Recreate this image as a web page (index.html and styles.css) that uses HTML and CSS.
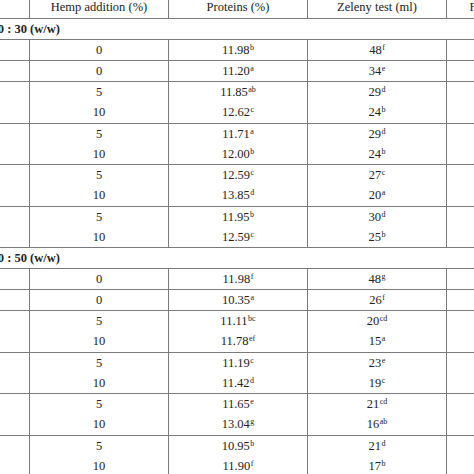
FILE: index.html
```html
<!DOCTYPE html>
<html>
<head>
<meta charset="utf-8">
<link rel="stylesheet" href="styles.css">
</head>
<body>
<div class="viewport">
<table class="tbl">
<colgroup><col class="c"><col class="c"><col class="c"><col class="c"><col class="c"></colgroup>
<thead>
<tr class="head"><th></th><th>Hemp addition (%)</th><th>Proteins (%)</th><th>Zeleny test (ml)</th><th>Falling number (s)</th></tr>
</thead>
<tbody>
<tr class="sec"><td colspan="5"><span class="sec-t">70 : 30 (w/w)</span></td></tr>
<tr class="one"><td></td><td>0</td><td>11.98<sup>b</sup></td><td>48<sup>f</sup></td><td></td></tr>
<tr class="one"><td></td><td>0</td><td>11.20<sup>a</sup></td><td>34<sup>e</sup></td><td></td></tr>
<tr class="two"><td></td><td><div>5</div><div>10</div></td><td><div>11.85<sup>ab</sup></div><div>12.62<sup>c</sup></div></td><td><div>29<sup>d</sup></div><div>24<sup>b</sup></div></td><td></td></tr>
<tr class="two"><td></td><td><div>5</div><div>10</div></td><td><div>11.71<sup>a</sup></div><div>12.00<sup>b</sup></div></td><td><div>29<sup>d</sup></div><div>24<sup>b</sup></div></td><td></td></tr>
<tr class="two"><td></td><td><div>5</div><div>10</div></td><td><div>12.59<sup>c</sup></div><div>13.85<sup>d</sup></div></td><td><div>27<sup>c</sup></div><div>20<sup>a</sup></div></td><td></td></tr>
<tr class="two"><td></td><td><div>5</div><div>10</div></td><td><div>11.95<sup>b</sup></div><div>12.59<sup>c</sup></div></td><td><div>30<sup>d</sup></div><div>25<sup>b</sup></div></td><td></td></tr>
<tr class="sec"><td colspan="5"><span class="sec-t">50 : 50 (w/w)</span></td></tr>
<tr class="one"><td></td><td>0</td><td>11.98<sup>f</sup></td><td>48<sup>g</sup></td><td></td></tr>
<tr class="one"><td></td><td>0</td><td>10.35<sup>a</sup></td><td>26<sup>f</sup></td><td></td></tr>
<tr class="two"><td></td><td><div>5</div><div>10</div></td><td><div>11.11<sup>bc</sup></div><div>11.78<sup>ef</sup></div></td><td><div>20<sup>cd</sup></div><div>15<sup>a</sup></div></td><td></td></tr>
<tr class="two"><td></td><td><div>5</div><div>10</div></td><td><div>11.19<sup>c</sup></div><div>11.42<sup>d</sup></div></td><td><div>23<sup>e</sup></div><div>19<sup>c</sup></div></td><td></td></tr>
<tr class="two"><td></td><td><div>5</div><div>10</div></td><td><div>11.65<sup>e</sup></div><div>13.04<sup>g</sup></div></td><td><div>21<sup>cd</sup></div><div>16<sup>ab</sup></div></td><td></td></tr>
<tr class="two"><td></td><td><div>5</div><div>10</div></td><td><div>10.95<sup>b</sup></div><div>11.90<sup>f</sup></div></td><td><div>21<sup>d</sup></div><div>17<sup>b</sup></div></td><td></td></tr>
</tbody>
</table>
</div>
</body>
</html>
```

FILE: styles.css
```css
html, body {
  margin: 0;
  padding: 0;
  background: #fff;
}
.viewport {
  width: 474px;
  height: 474px;
  overflow: hidden;
}
.tbl {
  border-collapse: collapse;
  table-layout: fixed;
  width: 695px;
  margin-left: -110px;
  margin-top: -5px;
  font-family: "Liberation Serif", "Times New Roman", serif;
  font-size: 12.5px;
  color: #222;
}
.tbl .c {
  width: 139px;
}
.tbl th, .tbl td {
  border: 1px solid #7a7a7a;
  padding: 0;
  text-align: center;
  font-weight: normal;
  vertical-align: middle;
}
.head th {
  height: 22px;
  line-height: 22px;
}
.sec td {
  text-align: left;
  border-left: none;
  border-right: none;
  height: 20px;
  line-height: 20px;
}
.sec-t {
  display: block;
  padding-left: 101px;
  font-weight: bold;
}
.one td {
  height: 20px;
  line-height: 20px;
}
.two td div {
  line-height: 20.25px;
  height: 20.25px;
}
.tbl sup {
  font-size: 8px;
  line-height: 0;
  vertical-align: 4px;
  margin-left: 0.5px;
}
```
